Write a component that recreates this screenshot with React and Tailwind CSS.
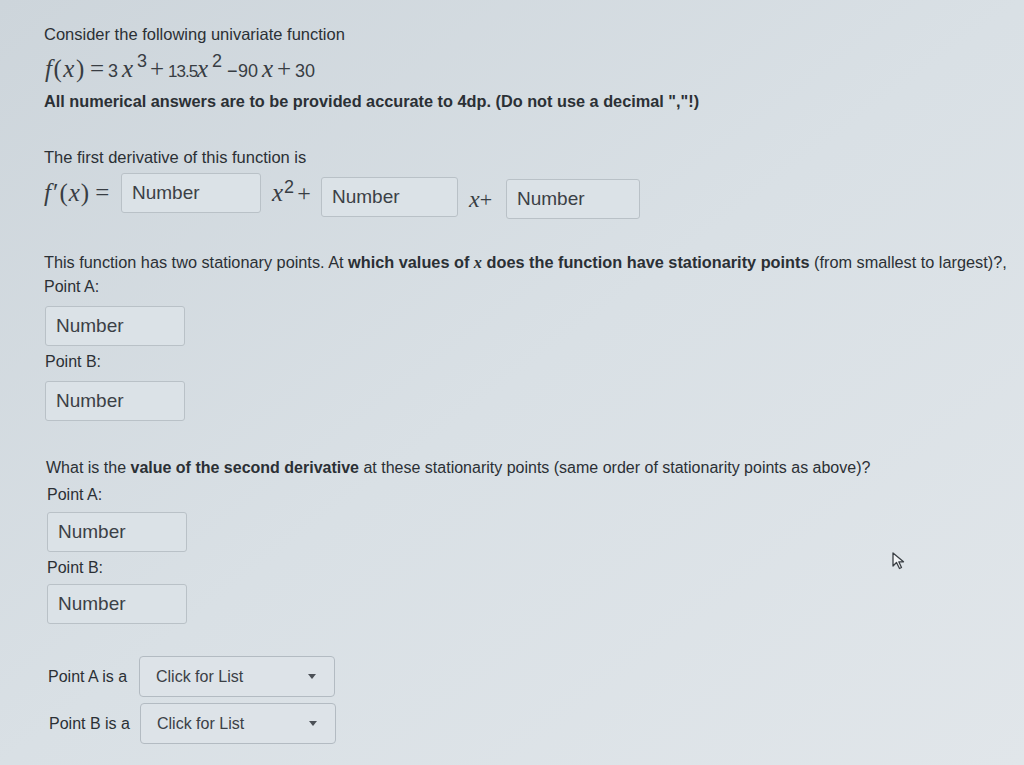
import React from "react";

const NumberBox = ({ className = "" }) => (
  <div
    className={`h-[40px] flex items-center pl-[10px] border border-[#b9c1c7] rounded-[3px] bg-[#dbe2e7] text-[19px] text-[#3b4046] ${className}`}
  >
    Number
  </div>
);

const Select = ({ className = "" }) => (
  <div
    className={`w-[196px] h-[41px] flex items-center justify-between pl-[16px] pr-[18px] border border-[#b3bbc2] rounded-[4px] bg-[#dde3e8] text-[16px] text-[#3b4046] ${className}`}
  >
    <span>Click for List</span>
    <svg width="8" height="5" viewBox="0 0 8 5">
      <path d="M0 0 L8 0 L4 5 Z" fill="#4b5056" />
    </svg>
  </div>
);

const serif = { fontFamily: '"Liberation Serif", serif' };

const MathI = ({ children }) => (
  <span className="italic" style={serif}>
    {children}
  </span>
);

// one piece of the formula, given a fixed slot width
const Cell = ({ w, children, kind = "serif", sup = false }) => (
  <span
    className={`inline-block shrink-0 ${w} ${kind === "serif" ? "text-[25px]" : "text-[18px]"} ${sup ? "relative -top-[10px]" : ""}`}
    style={kind === "serif" ? serif : undefined}
  >
    {children}
  </span>
);

export default function App() {
  return (
    <div
      className="relative w-[1024px] h-[765px] overflow-hidden bg-gradient-to-br from-[#cdd5db] via-[#d9e0e5] to-[#e1e6ea] text-[#2b3035]"
      style={{ fontFamily: '"Liberation Sans", Arial, sans-serif' }}
    >
      <div className="pl-[44px] pt-[23px]">
        <p className="text-[16.5px] leading-[22px]">Consider the following univariate function</p>

        {/* f(x) */}
        <div className="mt-[8px] h-[32px] ml-[1px] flex items-baseline leading-[32px] text-[#383d43]">
          <Cell w="w-[45px]"><span className="tracking-[1.5px]"><MathI>f</MathI>(<MathI>x</MathI>)</span></Cell>
          <Cell w="w-[18px]">=</Cell>
          <Cell w="w-[14px]" kind="sans">3</Cell>
          <Cell w="w-[15px]"><MathI>x</MathI></Cell>
          <Cell w="w-[13px]" kind="sans" sup>3</Cell>
          <Cell w="w-[18px]">+</Cell>
          <Cell w="w-[29px]" kind="sans"><span className="tracking-[-1px] text-[17px]">13.5</span></Cell>
          <Cell w="w-[15px]"><MathI>x</MathI></Cell>
          <Cell w="w-[15px]" kind="sans" sup>2</Cell>
          <Cell w="w-[11px]" kind="sans">−</Cell>
          <Cell w="w-[24px]" kind="sans">90</Cell>
          <Cell w="w-[15px]"><MathI>x</MathI></Cell>
          <Cell w="w-[18px]">+</Cell>
          <Cell w="w-[20px]" kind="sans">30</Cell>
        </div>

        <p className="mt-[5px] text-[16.3px] leading-[22px] font-bold">
          All numerical answers are to be provided accurate to 4dp. (Do not use a decimal ","!)
        </p>

        <p className="mt-[34px] text-[16.5px] leading-[22px]">The first derivative of this function is</p>

        {/* f'(x) row */}
        <div className="mt-[5px] flex items-start text-[#383d43]">
          <span className="text-[25px] w-[77px] h-[40px] flex items-center tracking-[1px]" style={serif}>
            <MathI>f</MathI>
            <span className="ml-[1px]">′</span>(<MathI>x</MathI>)<span className="ml-[5px]">=</span>
          </span>
          <NumberBox className="w-[140px]" />
          <span className="ml-[11px] text-[24px] w-[49px] h-[40px] flex items-center" style={serif}>
            <span className="text-[25px]"><MathI>x</MathI></span>
            <span className="text-[18px] -mt-[12px] ml-[1px]" style={{ fontFamily: '"Liberation Sans", Arial, sans-serif' }}>2</span>
            <span className="ml-[3px]">+</span>
          </span>
          <NumberBox className="w-[137px] mt-[4px]" />
          <span className="ml-[11px] text-[22px] w-[37px] h-[40px] mt-[6px] flex items-center" style={serif}>
            <span className="text-[24px]"><MathI>x</MathI></span>+
          </span>
          <NumberBox className="w-[134px] mt-[6px]" />
        </div>

        <p className="mt-[32px] text-[16.3px] leading-[22px] whitespace-nowrap">
          This function has two stationary points. At{" "}
          <b>
            which values of <MathI>x</MathI> does the function have stationarity points
          </b>{" "}
          (from smallest to largest)?,
        </p>
        <p className="mt-[2px] text-[16px] leading-[22px]">Point A:</p>
        <NumberBox className="w-[140px] mt-[8px] ml-[1px]" />
        <p className="mt-[5px] ml-[1px] text-[16px] leading-[22px]">Point B:</p>
        <NumberBox className="w-[140px] mt-[8px] ml-[1px]" />

        <p className="mt-[36px] ml-[2px] text-[16px] leading-[22px] whitespace-nowrap">
          What is the <b>value of the second derivative</b> at these stationarity points (same order of stationarity points as above)?
        </p>
        <p className="mt-[5px] ml-[3px] text-[16px] leading-[22px]">Point A:</p>
        <NumberBox className="w-[140px] mt-[6px] ml-[3px]" />
        <p className="mt-[5px] ml-[3px] text-[16px] leading-[22px]">Point B:</p>
        <NumberBox className="w-[140px] mt-[5px] ml-[3px]" />

        <div className="mt-[32px] ml-[4px] flex items-center">
          <span className="w-[91px] text-[16px]">Point A is a</span>
          <Select />
        </div>
        <div className="mt-[6px] ml-[5px] flex items-center">
          <span className="w-[91px] text-[16px]">Point B is a</span>
          <Select />
        </div>
      </div>

      {/* mouse cursor */}
      <svg className="absolute left-[892px] top-[552px]" width="16" height="18" viewBox="0 0 16 18">
        <path d="M1 1 L1 14 L4.5 10.5 L7.5 16.5 L9.5 15.5 L6.8 9.8 L11.5 9.8 Z" fill="#f2f4f6" stroke="#3a3f44" strokeWidth="1.3" strokeLinejoin="round" />
      </svg>
    </div>
  );
}
